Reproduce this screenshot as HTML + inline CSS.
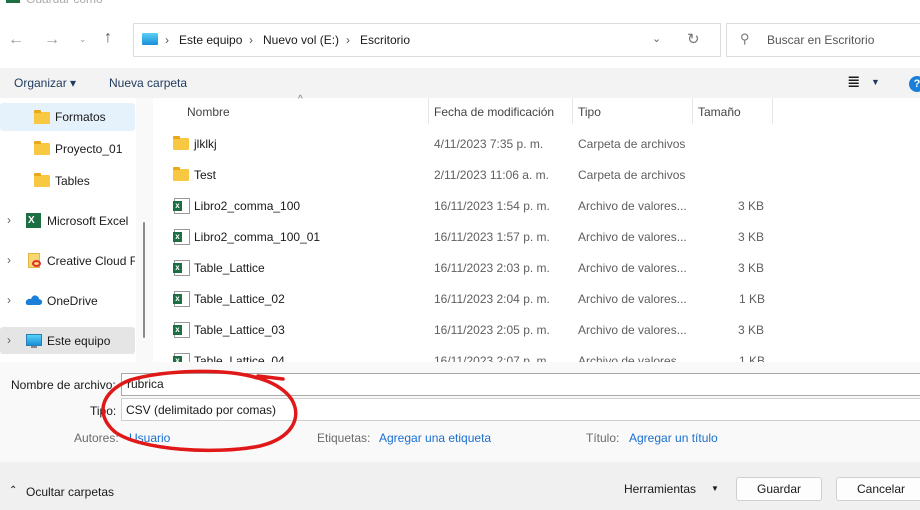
<!DOCTYPE html>
<html><head><meta charset="utf-8"><style>
*{box-sizing:border-box;margin:0;padding:0}
body{width:920px;height:510px;overflow:hidden;background:#fff;font-family:"Liberation Sans",sans-serif;font-size:12px;color:#1a1a1a;position:relative}
.a{position:absolute;white-space:nowrap}
.fold{position:absolute;width:16px;height:12px;background:#f8c843;border-radius:1px}
.fold:before{content:"";position:absolute;left:0;top:-2px;width:7px;height:3px;background:#e8a817;border-radius:1px 1px 0 0}
.xl{position:absolute;width:16px;height:16px;border:1px solid #999;background:#fff}
.xl:before{content:"x";position:absolute;left:-2px;top:2px;width:9px;height:10px;background:#1d6f42;color:#fff;font-size:8px;line-height:9px;text-align:center;font-weight:bold}
.gray{color:#5f5f5f}
.link{color:#1a6fd0}
.sep{position:absolute;top:98px;width:1px;height:26px;background:#e5e5e5}
.btn{position:absolute;border:1px solid #d0d0d0;background:#fdfdfd;border-radius:3px;text-align:center;line-height:22px}
</style></head><body>
<div class="a" style="left:6px;top:-9px;width:14px;height:12px;background:#1d6f42"></div>
<div class="a gray" style="left:26px;top:-8px;color:#aaa">Guardar como</div>
<div class="a" style="left:8px;top:31px;font-size:16px;color:#999">←</div>
<div class="a" style="left:44px;top:31px;font-size:16px;color:#999">→</div>
<div class="a" style="left:79px;top:34px;font-size:9px;color:#999">⌄</div>
<div class="a" style="left:104px;top:29px;font-size:16px;color:#555">↑</div>
<div class="a" style="left:133px;top:23px;width:588px;height:34px;border:1px solid #dcdcdc"></div>
<div class="a" style="left:142px;top:33px;width:16px;height:12px;background:linear-gradient(#5ad0f5,#1a8fd8);border-radius:1px"></div>
<div class="a" style="left:165px;top:33px;color:#555">›</div>
<div class="a" style="left:179px;top:33px">Este equipo</div>
<div class="a" style="left:249px;top:33px;color:#555">›</div>
<div class="a" style="left:263px;top:33px">Nuevo vol (E:)</div>
<div class="a" style="left:346px;top:33px;color:#555">›</div>
<div class="a" style="left:360px;top:33px">Escritorio</div>
<div class="a" style="left:652px;top:32px;color:#666;font-size:11px">⌄</div>
<div class="a" style="left:687px;top:30px;color:#777;font-size:15px">↻</div>
<div class="a" style="left:726px;top:23px;width:200px;height:34px;border:1px solid #dcdcdc"></div>
<div class="a" style="left:740px;top:31px;color:#777;font-size:13px;transform:scaleX(-1)">⚲</div>
<div class="a" style="left:767px;top:33px;color:#555">Buscar en Escritorio</div>
<div class="a" style="left:0;top:68px;width:920px;height:30px;background:#f3f3f3"></div>
<div class="a" style="left:14px;top:76px;color:#1e3a5f">Organizar ▾</div>
<div class="a" style="left:109px;top:76px;color:#1e3a5f">Nueva carpeta</div>
<div class="a" style="left:847px;top:72px;font-size:16px">≣</div>
<div class="a" style="left:871px;top:77px;font-size:9px;color:#1e3a5f">▼</div>
<div class="a" style="left:909px;top:76px;width:16px;height:16px;border-radius:50%;background:#1a7fd8;color:#fff;font-size:11px;font-weight:bold;text-align:center;line-height:16px">?</div>
<div class="a" style="left:136px;top:98px;width:17px;height:264px;background:#f9f9f9"></div>
<div class="a" style="left:143px;top:222px;width:2px;height:116px;background:#8a8a8a;border-radius:1px"></div>
<div class="a" style="left:0;top:103px;width:135px;height:28px;background:#e5f1fb;border-radius:3px"></div>
<div class="fold" style="left:34px;top:112px"></div><div class="a" style="left:55px;top:110px">Formatos</div>
<div class="fold" style="left:34px;top:143px"></div><div class="a" style="left:55px;top:142px">Proyecto_01</div>
<div class="fold" style="left:34px;top:175px"></div><div class="a" style="left:55px;top:174px">Tables</div>
<div class="a gray" style="left:7px;top:213px">›</div>
<div class="a" style="left:26px;top:213px;width:15px;height:15px;background:#1d6f42;color:#fff;font-size:10px;font-weight:bold;line-height:15px;padding-left:2px">X</div>
<div class="a" style="left:47px;top:214px">Microsoft Excel</div>
<div class="a gray" style="left:7px;top:253px">›</div>
<div class="a" style="left:28px;top:253px;width:12px;height:15px;background:#f8d772;border:1px solid #e2b640"></div>
<div class="a" style="left:32px;top:260px;width:9px;height:7px;border:2px solid #e03030;border-radius:50%"></div>
<div class="a" style="left:47px;top:254px;width:88px;overflow:hidden">Creative Cloud Files</div>
<div class="a gray" style="left:7px;top:293px">›</div>
<svg class="a" style="left:25px;top:294px" width="18" height="12"><path d="M3 11 Q0 11 1 7 Q3 4 6 5 Q8 0 12 2 Q14 3 14 5 Q18 6 17 9 Q16 11 14 11 Z" fill="#1a7fd8"/></svg>
<div class="a" style="left:47px;top:294px">OneDrive</div>
<div class="a" style="left:0;top:327px;width:135px;height:27px;background:#e5e5e5;border-radius:3px"></div>
<div class="a gray" style="left:7px;top:333px">›</div>
<div class="a" style="left:26px;top:334px;width:16px;height:12px;background:linear-gradient(#5ad0f5,#1a8fd8);border:1px solid #2b7fb8"></div>
<div class="a" style="left:31px;top:346px;width:6px;height:2px;background:#888"></div>
<div class="a" style="left:47px;top:334px">Este equipo</div>
<div class="a" style="left:298px;top:94px;font-size:10px;color:#777">^</div>
<div class="a" style="left:187px;top:105px;color:#444">Nombre</div>
<div class="sep" style="left:428px"></div><div class="a" style="left:434px;top:105px;color:#444">Fecha de modificación</div>
<div class="sep" style="left:572px"></div><div class="a" style="left:578px;top:105px;color:#444">Tipo</div>
<div class="sep" style="left:692px"></div><div class="a" style="left:698px;top:105px;color:#444">Tamaño</div>
<div class="sep" style="left:772px"></div>
<div class="fold" style="left:173px;top:138px"></div><div class="a" style="left:194px;top:137px">jlklkj</div><div class="a gray" style="left:434px;top:137px">4/11/2023 7:35 p. m.</div><div class="a gray" style="left:578px;top:137px">Carpeta de archivos</div>
<div class="fold" style="left:173px;top:169px"></div><div class="a" style="left:194px;top:168px">Test</div><div class="a gray" style="left:434px;top:168px">2/11/2023 11:06 a. m.</div><div class="a gray" style="left:578px;top:168px">Carpeta de archivos</div>
<div class="xl" style="left:174px;top:198px"></div><div class="a" style="left:194px;top:199px">Libro2_comma_100</div><div class="a gray" style="left:434px;top:199px">16/11/2023 1:54 p. m.</div><div class="a gray" style="left:578px;top:199px">Archivo de valores...</div><div class="a gray" style="left:738px;top:199px">3 KB</div>
<div class="xl" style="left:174px;top:229px"></div><div class="a" style="left:194px;top:230px">Libro2_comma_100_01</div><div class="a gray" style="left:434px;top:230px">16/11/2023 1:57 p. m.</div><div class="a gray" style="left:578px;top:230px">Archivo de valores...</div><div class="a gray" style="left:738px;top:230px">3 KB</div>
<div class="xl" style="left:174px;top:260px"></div><div class="a" style="left:194px;top:261px">Table_Lattice</div><div class="a gray" style="left:434px;top:261px">16/11/2023 2:03 p. m.</div><div class="a gray" style="left:578px;top:261px">Archivo de valores...</div><div class="a gray" style="left:738px;top:261px">3 KB</div>
<div class="xl" style="left:174px;top:291px"></div><div class="a" style="left:194px;top:292px">Table_Lattice_02</div><div class="a gray" style="left:434px;top:292px">16/11/2023 2:04 p. m.</div><div class="a gray" style="left:578px;top:292px">Archivo de valores...</div><div class="a gray" style="left:739px;top:292px">1 KB</div>
<div class="xl" style="left:174px;top:322px"></div><div class="a" style="left:194px;top:323px">Table_Lattice_03</div><div class="a gray" style="left:434px;top:323px">16/11/2023 2:05 p. m.</div><div class="a gray" style="left:578px;top:323px">Archivo de valores...</div><div class="a gray" style="left:738px;top:323px">3 KB</div>
<div class="xl" style="left:174px;top:353px"></div><div class="a" style="left:194px;top:354px">Table_Lattice_04</div><div class="a gray" style="left:434px;top:354px">16/11/2023 2:07 p. m.</div><div class="a gray" style="left:578px;top:354px">Archivo de valores...</div><div class="a gray" style="left:739px;top:354px">1 KB</div>
<div class="a" style="left:0;top:362px;width:920px;height:100px;background:#f9f9f9"></div>
<div class="a" style="left:11px;top:378px">Nombre de archivo:</div>
<div class="a" style="left:121px;top:373px;width:810px;height:23px;border:1px solid #a8a8a8;background:#fff"></div>
<div class="a" style="left:127px;top:377px">rubrica</div>
<div class="a" style="left:90px;top:404px">Tipo:</div>
<div class="a" style="left:121px;top:398px;width:810px;height:23px;border:1px solid #cfcfcf;background:#fff"></div>
<div class="a" style="left:126px;top:403px">CSV (delimitado por comas)</div>
<div class="a gray" style="left:74px;top:431px;color:#6a6a6a">Autores:</div><div class="a link" style="left:129px;top:431px">Usuario</div>
<div class="a gray" style="left:317px;top:431px;color:#6a6a6a">Etiquetas:</div><div class="a link" style="left:379px;top:431px">Agregar una etiqueta</div>
<div class="a gray" style="left:586px;top:431px;color:#6a6a6a">Título:</div><div class="a link" style="left:629px;top:431px">Agregar un título</div>
<div class="a" style="left:0;top:462px;width:920px;height:48px;background:#f0f0f0"></div>
<div class="a" style="left:9px;top:485px;font-size:10px">⌃</div>
<div class="a" style="left:26px;top:485px">Ocultar carpetas</div>
<div class="a" style="left:624px;top:482px">Herramientas</div>
<div class="a" style="left:711px;top:484px;font-size:8px">▼</div>
<div class="btn" style="left:736px;top:477px;width:86px;height:24px">Guardar</div>
<div class="btn" style="left:836px;top:477px;width:90px;height:24px">Cancelar</div>
<svg class="a" style="left:0;top:0" width="920" height="510"><path d="M257 378 C225 368 165 370 130 380 C100 392 95 415 115 432 C140 450 215 455 260 446 C292 438 302 418 292 400 C283 386 266 379 246 375 M258 376 L283 379" fill="none" stroke="#e01818" stroke-width="3.5" stroke-linecap="round"/></svg>
</body></html>
